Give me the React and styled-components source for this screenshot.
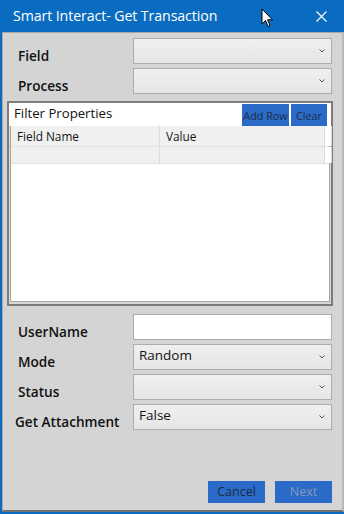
import React from "react";
import styled, { createGlobalStyle } from "styled-components";

const Global = createGlobalStyle`
  html, body { margin: 0; padding: 0; background: #d4d4d4; }
  body { font-family: "Open Sans", "Noto Sans", sans-serif; }
  * { box-sizing: border-box; }
`;

const Window = styled.div`
  position: relative;
  width: 344px;
  height: 514px;
  display: flex;
  flex-direction: column;
  background: #0a6cc0;
  overflow: hidden;
`;

const TitleBar = styled.div`
  height: 32px;
  flex: none;
  display: flex;
  align-items: center;
  padding-left: 13px;
  color: #fff;
  font-size: 14.2px;
  letter-spacing: -0.1px;
`;

const TitleText = styled.div`
  flex: 1;
  margin-top: -2px;
`;

const CloseBtn = styled.div`
  width: 44px;
  height: 32px;
  display: flex;
  align-items: center;
  justify-content: center;
  margin-right: 1px;
`;

const Cursor = styled.svg`
  position: absolute;
  left: 261px;
  top: 8px;
`;

const Body = styled.div`
  flex: 1;
  margin: 0 0 2px 2px;
  background: #d4d4d4;
  border-top: 1px solid #a8a8a8;
  border-left: 1px solid #a8a8a8;
  border-right: 2px solid #b8b8b8;
  border-bottom: 2px solid #707070;
  display: flex;
  flex-direction: column;
  padding: 5px 0 7px 0;
`;

const Rows = styled.div`
  display: flex;
  flex-direction: column;
  gap: 4px;
  padding-left: ${(p) => p.$pl}px;
  margin-top: ${(p) => p.$mt || 0}px;
`;

const Row = styled.div`
  display: grid;
  grid-template-columns: 118px 199px;
  height: 26px;
  align-items: center;
`;

const Label = styled.div`
  font-size: 13.6px;
  font-weight: 600;
  color: #111;
  padding-left: ${(p) => p.$indent || 0}px;
  transform: translateY(4px);
  white-space: nowrap;
`;

const SelectBox = styled.div`
  height: 26px;
  border: 1px solid #adadad;
  background: linear-gradient(#efefef, #e6e6e6);
  display: flex;
  align-items: center;
  padding: 0 6px 0 5px;
  font-size: 13.5px;
  color: #141414;
`;

const SelectValue = styled.div`
  flex: 1;
  margin-top: -4px;
`;

const TextInput = styled.div`
  height: 26px;
  border: 1px solid #adadad;
  background: #fff;
`;

const Panel = styled.div`
  margin: 7px 0 0 4px;
  width: 326px;
  height: 205px;
  border: 2px solid #7c7c7c;
  background: #d8d8d8;
  display: flex;
  flex-direction: column;
`;

const PanelHeader = styled.div`
  height: 23px;
  background: #fff;
  display: flex;
  align-items: stretch;
  padding-right: 4px;
`;

const PanelTitle = styled.div`
  flex: 1;
  font-size: 13.2px;
  color: #111;
  padding-left: 5px;
  display: flex;
  align-items: center;
  margin-top: -3px;
`;

const SmallBtn = styled.div`
  width: ${(p) => p.$w}px;
  margin-left: 2px;
  margin-top: 1px;
  background: #2a6bc9;
  color: #1e2c44;
  font-size: 10.8px;
  display: flex;
  align-items: center;
  justify-content: center;
`;

const Grid = styled.div`
  flex: 1;
  margin: 0 1px 2px 1px;
  background: #fff;
  border: 1px solid #a6a6a6;
  border-top: none;
  display: flex;
  flex-direction: column;
`;

const GridRow = styled.div`
  display: grid;
  grid-template-columns: 149px 165px 1fr;
  height: ${(p) => p.$h}px;
  border-bottom: 1px solid #e2e2e2;
`;

const Cell = styled.div`
  background: ${(p) => (p.$blank ? "#fff" : "#f0f0f0")};
  border-right: 1px solid #dcdcdc;
  font-size: 11.8px;
  color: #141414;
  padding-left: 6px;
  display: flex;
  align-items: center;
`;

const Footer = styled.div`
  margin-top: auto;
  display: flex;
  justify-content: flex-end;
  gap: 10px;
  padding-right: 10px;
`;

const FooterBtn = styled.div`
  width: 57px;
  height: 22px;
  background: #2a6bc9;
  color: ${(p) => (p.$disabled ? "#8598b8" : "#1c2a42")};
  font-size: 12.5px;
  display: flex;
  align-items: center;
  justify-content: center;
  padding-bottom: 1px;
`;

const Chevron = () => (
  <svg width="6" height="4" viewBox="0 0 6 4">
    <path d="M0.5 0.5 L3 3 L5.5 0.5" fill="none" stroke="#555" strokeWidth="1" />
  </svg>
);

const Select = ({ value }) => (
  <SelectBox>
    <SelectValue>{value}</SelectValue>
    <Chevron />
  </SelectBox>
);

export default function App() {
  return (
    <>
      <Global />
      <Window>
        <TitleBar>
          <TitleText>Smart Interact- Get Transaction</TitleText>
          <CloseBtn>
            <svg width="11" height="11" viewBox="0 0 11 11">
              <path d="M0.5 0.5 L10.5 10.5 M10.5 0.5 L0.5 10.5" stroke="#fff" strokeWidth="1.1" />
            </svg>
          </CloseBtn>
        </TitleBar>
        <Cursor width="13" height="20" viewBox="0 0 13 20">
          <path
            d="M1 1 L1 16 L4.5 12.5 L7 18.5 L9 17.6 L6.6 11.8 L11.5 11.8 Z"
            fill="#fff"
            stroke="#000"
            strokeWidth="1"
            strokeLinejoin="round"
          />
        </Cursor>
        <Body>
          <Rows $pl={12}>
            <Row>
              <Label $indent={3}>Field</Label>
              <Select value="" />
            </Row>
            <Row>
              <Label $indent={3}>Process</Label>
              <Select value="" />
            </Row>
          </Rows>
          <Panel>
            <PanelHeader>
              <PanelTitle>Filter Properties</PanelTitle>
              <SmallBtn $w={47}>Add Row</SmallBtn>
              <SmallBtn $w={36}>Clear</SmallBtn>
            </PanelHeader>
            <Grid>
              <GridRow $h={21}>
                <Cell>Field Name</Cell>
                <Cell>Value</Cell>
                <Cell $blank />
              </GridRow>
              <GridRow $h={17}>
                <Cell />
                <Cell />
                <Cell $blank />
              </GridRow>
            </Grid>
          </Panel>
          <Rows $pl={12} $mt={8}>
            <Row>
              <Label $indent={3}>UserName</Label>
              <TextInput />
            </Row>
            <Row>
              <Label $indent={3}>Mode</Label>
              <Select value="Random" />
            </Row>
            <Row>
              <Label $indent={3}>Status</Label>
              <Select value="" />
            </Row>
            <Row>
              <Label>Get Attachment</Label>
              <Select value="False" />
            </Row>
          </Rows>
          <Footer>
            <FooterBtn>Cancel</FooterBtn>
            <FooterBtn $disabled>Next</FooterBtn>
          </Footer>
        </Body>
      </Window>
    </>
  );
}
